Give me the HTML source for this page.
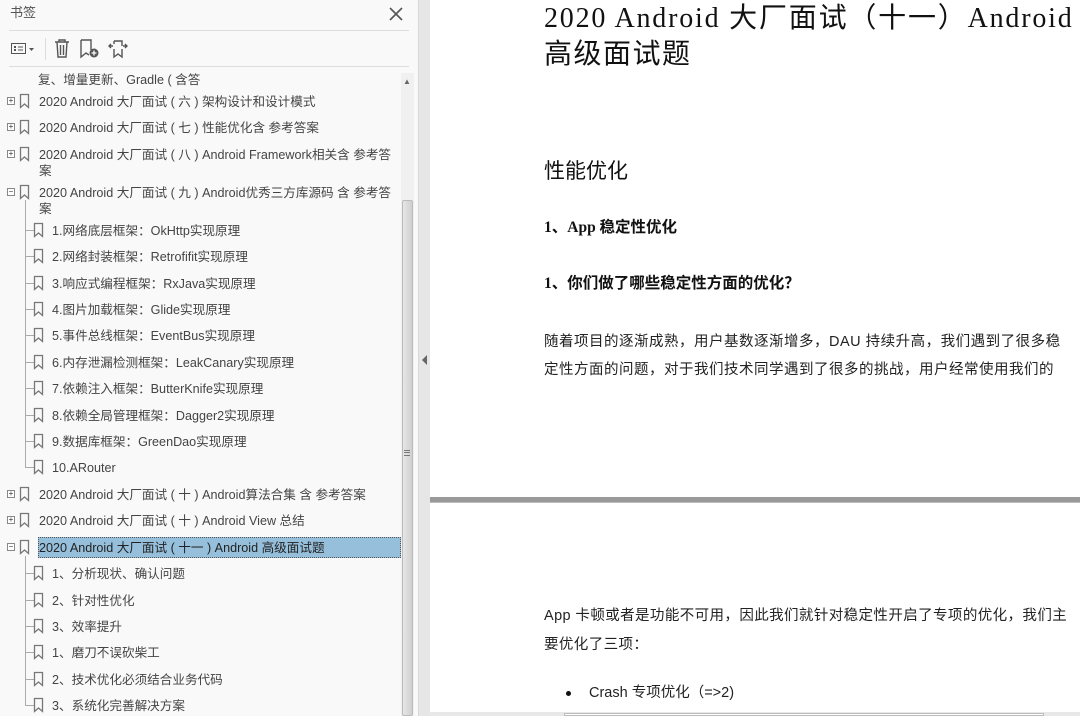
<!DOCTYPE html>
<html><head><meta charset="utf-8"><style>
*{margin:0;padding:0;box-sizing:border-box}
body{width:1080px;height:716px;overflow:hidden;position:relative;background:#fff;font-family:"Liberation Sans","Noto Sans CJK SC",sans-serif}
.side{position:absolute;left:0;top:0;width:418px;height:716px;background:#f9f9f9}
.t{position:absolute;font-size:12.6px;color:#444;white-space:nowrap;line-height:16px}
.bm{position:absolute;width:11px;height:16px}
.pm{position:absolute;width:8px;height:8px;border:1px solid #888;background:#fff;font-size:8px;line-height:6px;text-align:center;color:#333}
.hl{position:absolute;left:33px;width:10px;height:1px;background:#aaa}
.pg{position:absolute;font-family:"Liberation Serif","Noto Sans CJK SC",sans-serif;color:#111;white-space:nowrap}
.ps{position:absolute;font-family:"Liberation Sans","Noto Sans CJK SC",sans-serif;color:#222;white-space:nowrap}
</style></head><body>
<div class="side">
  <div class="t" style="left:10px;top:5px;font-size:13px;color:#555">书签</div>
  <svg style="position:absolute;left:389px;top:7px" width="14" height="14"><path d="M1 1L13 13M13 1L1 13" stroke="#555" stroke-width="1.6"/></svg>
  <div style="position:absolute;left:9px;top:30px;width:400px;height:1px;background:#ddd"></div>
  <div style="position:absolute;left:9px;top:66px;width:400px;height:1px;background:#ddd"></div>
  <svg style="position:absolute;left:10px;top:40px" width="30" height="18"><rect x="1.5" y="3.5" width="14" height="10" fill="none" stroke="#555"/><rect x="4" y="6" width="2" height="2" fill="#555"/><rect x="4" y="9" width="2" height="2" fill="#555"/><path d="M8 7h5M8 10h5" stroke="#555"/><path d="M19 8h5l-2.5 3z" fill="#555"/></svg>
  <div style="position:absolute;left:45px;top:38px;width:1px;height:22px;background:#ddd"></div>
  <svg style="position:absolute;left:52px;top:38px" width="20" height="22"><path d="M3 4h14M7 4V2h6v2M5 4l1 15h8l1-15M8.5 7v10M11.5 7v10" fill="none" stroke="#555" stroke-width="1.4"/></svg>
  <svg style="position:absolute;left:79px;top:38px" width="22" height="22"><path d="M2 2h10v10M2 2v17l5-4 3 2" fill="none" stroke="#555" stroke-width="1.4"/><circle cx="15" cy="15" r="4.5" fill="#555"/><path d="M15 12.5v5M12.5 15h5" stroke="#fff" stroke-width="1.3"/></svg>
  <svg style="position:absolute;left:106px;top:38px" width="24" height="22"><path d="M8 3h8v5M8 3v3M8 11v8l4-3 4 3v-8M3 8h4M5 6l-2 2 2 2M21 8h-4M19 6l2 2-2 2" fill="none" stroke="#555" stroke-width="1.4"/></svg>

  <div style="position:absolute;left:401px;top:73px;width:13px;height:643px;background:#f0f0f0"></div>
  <div style="position:absolute;left:402px;top:200px;width:11px;height:516px;background:linear-gradient(90deg,#e6e6e6,#cfcfcf);border:1px solid #bbb;border-radius:2px"></div>
  <div class="t" style="left:403px;top:74px;font-size:8px;color:#666">▲</div>
  <div style="position:absolute;left:404px;top:450px;width:6px;height:6px;border-top:1px solid #777;border-bottom:1px solid #777"></div>
  <div style="position:absolute;left:404px;top:452px;width:6px;height:1px;background:#777"></div>

  <div style="position:absolute;left:25px;top:200px;width:1px;height:268px;background:#aaa"></div>
  <div style="position:absolute;left:25px;top:556px;width:1px;height:150px;background:#aaa"></div>

  <div class="t" style="left:38px;top:72px">复、增量更新、Gradle ( 含答</div>

  <div class="pm" style="left:7px;top:97px">+</div><svg class="bm" style="left:19px;top:93px"><path d="M1.5 1.5h8v13l-4-3.5-4 3.5z" fill="none" stroke="#777" stroke-width="1.3"/></svg><div class="t" style="left:39px;top:94px">2020 Android 大厂面试 ( 六 ) 架构设计和设计模式</div>
  <div class="pm" style="left:7px;top:123px">+</div><svg class="bm" style="left:19px;top:119px"><path d="M1.5 1.5h8v13l-4-3.5-4 3.5z" fill="none" stroke="#777" stroke-width="1.3"/></svg><div class="t" style="left:39px;top:120px">2020 Android 大厂面试 ( 七 ) 性能优化含 参考答案</div>
  <div class="pm" style="left:7px;top:150px">+</div><svg class="bm" style="left:19px;top:146px"><path d="M1.5 1.5h8v13l-4-3.5-4 3.5z" fill="none" stroke="#777" stroke-width="1.3"/></svg><div class="t" style="left:39px;top:147px">2020 Android 大厂面试 ( 八 ) Android Framework相关含 参考答</div><div class="t" style="left:39px;top:163px">案</div>
  <div class="pm" style="left:7px;top:188px">−</div><svg class="bm" style="left:19px;top:184px"><path d="M1.5 1.5h8v13l-4-3.5-4 3.5z" fill="none" stroke="#777" stroke-width="1.3"/></svg><div class="t" style="left:39px;top:185px">2020 Android 大厂面试 ( 九 ) Android优秀三方库源码 含 参考答</div><div class="t" style="left:39px;top:201px">案</div>

  <div class="hl" style="left:26px;top:230px;width:8px"></div><svg class="bm" style="left:33px;top:222px"><path d="M1.5 1.5h8v13l-4-3.5-4 3.5z" fill="none" stroke="#777" stroke-width="1.3"/></svg><div class="t" style="left:52px;top:223px">1.网络底层框架：OkHttp实现原理</div>
  <div class="hl" style="left:26px;top:256px;width:8px"></div><svg class="bm" style="left:33px;top:248px"><path d="M1.5 1.5h8v13l-4-3.5-4 3.5z" fill="none" stroke="#777" stroke-width="1.3"/></svg><div class="t" style="left:52px;top:249px">2.网络封装框架：Retrofifit实现原理</div>
  <div class="hl" style="left:26px;top:283px;width:8px"></div><svg class="bm" style="left:33px;top:275px"><path d="M1.5 1.5h8v13l-4-3.5-4 3.5z" fill="none" stroke="#777" stroke-width="1.3"/></svg><div class="t" style="left:52px;top:276px">3.响应式编程框架：RxJava实现原理</div>
  <div class="hl" style="left:26px;top:309px;width:8px"></div><svg class="bm" style="left:33px;top:301px"><path d="M1.5 1.5h8v13l-4-3.5-4 3.5z" fill="none" stroke="#777" stroke-width="1.3"/></svg><div class="t" style="left:52px;top:302px">4.图片加载框架：Glide实现原理</div>
  <div class="hl" style="left:26px;top:335px;width:8px"></div><svg class="bm" style="left:33px;top:327px"><path d="M1.5 1.5h8v13l-4-3.5-4 3.5z" fill="none" stroke="#777" stroke-width="1.3"/></svg><div class="t" style="left:52px;top:328px">5.事件总线框架：EventBus实现原理</div>
  <div class="hl" style="left:26px;top:362px;width:8px"></div><svg class="bm" style="left:33px;top:354px"><path d="M1.5 1.5h8v13l-4-3.5-4 3.5z" fill="none" stroke="#777" stroke-width="1.3"/></svg><div class="t" style="left:52px;top:355px">6.内存泄漏检测框架：LeakCanary实现原理</div>
  <div class="hl" style="left:26px;top:388px;width:8px"></div><svg class="bm" style="left:33px;top:380px"><path d="M1.5 1.5h8v13l-4-3.5-4 3.5z" fill="none" stroke="#777" stroke-width="1.3"/></svg><div class="t" style="left:52px;top:381px">7.依赖注入框架：ButterKnife实现原理</div>
  <div class="hl" style="left:26px;top:415px;width:8px"></div><svg class="bm" style="left:33px;top:407px"><path d="M1.5 1.5h8v13l-4-3.5-4 3.5z" fill="none" stroke="#777" stroke-width="1.3"/></svg><div class="t" style="left:52px;top:408px">8.依赖全局管理框架：Dagger2实现原理</div>
  <div class="hl" style="left:26px;top:441px;width:8px"></div><svg class="bm" style="left:33px;top:433px"><path d="M1.5 1.5h8v13l-4-3.5-4 3.5z" fill="none" stroke="#777" stroke-width="1.3"/></svg><div class="t" style="left:52px;top:434px">9.数据库框架：GreenDao实现原理</div>
  <div class="hl" style="left:26px;top:467px;width:8px"></div><svg class="bm" style="left:33px;top:459px"><path d="M1.5 1.5h8v13l-4-3.5-4 3.5z" fill="none" stroke="#777" stroke-width="1.3"/></svg><div class="t" style="left:52px;top:460px">10.ARouter</div>

  <div class="pm" style="left:7px;top:490px">+</div><svg class="bm" style="left:19px;top:486px"><path d="M1.5 1.5h8v13l-4-3.5-4 3.5z" fill="none" stroke="#777" stroke-width="1.3"/></svg><div class="t" style="left:39px;top:487px">2020 Android 大厂面试 ( 十 ) Android算法合集  含 参考答案</div>
  <div class="pm" style="left:7px;top:516px">+</div><svg class="bm" style="left:19px;top:512px"><path d="M1.5 1.5h8v13l-4-3.5-4 3.5z" fill="none" stroke="#777" stroke-width="1.3"/></svg><div class="t" style="left:39px;top:513px">2020 Android 大厂面试 ( 十 ) Android View 总结</div>
  <div style="position:absolute;left:38px;top:537px;width:363px;height:21px;background:#96bfdb;border:1px dotted #555"></div>
  <div class="pm" style="left:7px;top:543px">−</div><svg class="bm" style="left:19px;top:539px"><path d="M1.5 1.5h8v13l-4-3.5-4 3.5z" fill="none" stroke="#777" stroke-width="1.3"/></svg><div class="t" style="left:39px;top:540px;color:#222">2020 Android 大厂面试 ( 十一 ) Android 高级面试题</div>

  <div class="hl" style="left:26px;top:573px;width:8px"></div><svg class="bm" style="left:33px;top:565px"><path d="M1.5 1.5h8v13l-4-3.5-4 3.5z" fill="none" stroke="#777" stroke-width="1.3"/></svg><div class="t" style="left:52px;top:566px">1、分析现状、确认问题</div>
  <div class="hl" style="left:26px;top:600px;width:8px"></div><svg class="bm" style="left:33px;top:592px"><path d="M1.5 1.5h8v13l-4-3.5-4 3.5z" fill="none" stroke="#777" stroke-width="1.3"/></svg><div class="t" style="left:52px;top:593px">2、针对性优化</div>
  <div class="hl" style="left:26px;top:626px;width:8px"></div><svg class="bm" style="left:33px;top:618px"><path d="M1.5 1.5h8v13l-4-3.5-4 3.5z" fill="none" stroke="#777" stroke-width="1.3"/></svg><div class="t" style="left:52px;top:619px">3、效率提升</div>
  <div class="hl" style="left:26px;top:652px;width:8px"></div><svg class="bm" style="left:33px;top:644px"><path d="M1.5 1.5h8v13l-4-3.5-4 3.5z" fill="none" stroke="#777" stroke-width="1.3"/></svg><div class="t" style="left:52px;top:645px">1、磨刀不误砍柴工</div>
  <div class="hl" style="left:26px;top:679px;width:8px"></div><svg class="bm" style="left:33px;top:671px"><path d="M1.5 1.5h8v13l-4-3.5-4 3.5z" fill="none" stroke="#777" stroke-width="1.3"/></svg><div class="t" style="left:52px;top:672px">2、技术优化必须结合业务代码</div>
  <div class="hl" style="left:26px;top:705px;width:8px"></div><svg class="bm" style="left:33px;top:697px"><path d="M1.5 1.5h8v13l-4-3.5-4 3.5z" fill="none" stroke="#777" stroke-width="1.3"/></svg><div class="t" style="left:52px;top:698px">3、系统化完善解决方案</div>
</div>

<div style="position:absolute;left:418px;top:0;width:12px;height:716px;background:#e6e6e6;border-left:1px solid #d8d8d8"></div>
<svg style="position:absolute;left:422px;top:355px" width="6" height="10"><path d="M5 0v10L0 5z" fill="#666"/></svg>

<div class="pg" style="left:544px;top:2px;font-size:28px;line-height:34px;letter-spacing:1.8px">2020 Android 大厂面试（十一）Android</div>
<div class="pg" style="left:544px;top:38px;font-size:28px;line-height:34px;letter-spacing:1.5px">高级面试题</div>
<div class="pg" style="left:544px;top:157px;font-size:21px;line-height:28px">性能优化</div>
<div class="pg" style="left:544px;top:217px;font-size:15.5px;font-weight:bold;line-height:22px">1、App 稳定性优化</div>
<div class="pg" style="left:544px;top:273px;font-size:15.5px;font-weight:bold;line-height:22px">1、你们做了哪些稳定性方面的优化？</div>
<div class="ps" style="left:544px;top:328px;font-size:14.5px;line-height:28px;letter-spacing:0.5px">随着项目的逐渐成熟，用户基数逐渐增多，DAU 持续升高，我们遇到了很多稳<br>定性方面的问题，对于我们技术同学遇到了很多的挑战，用户经常使用我们的</div>

<div style="position:absolute;left:430px;top:497px;width:650px;height:6px;background:#999;border-bottom:1px solid #bbb"></div>

<div class="ps" style="left:544px;top:602px;font-size:14.5px;line-height:29px;letter-spacing:0.4px">App 卡顿或者是功能不可用，因此我们就针对稳定性开启了专项的优化，我们主<br>要优化了三项：</div>
<div style="position:absolute;left:566px;top:691px;width:5px;height:5px;border-radius:50%;background:#111"></div>
<div class="ps" style="left:589px;top:682px;font-size:14.5px;line-height:22px">Crash 专项优化（=&gt;2)</div>

<div style="position:absolute;left:430px;top:712px;width:650px;height:4px;background:#e8e8e8"></div>
<div style="position:absolute;left:564px;top:713px;width:480px;height:3px;border:1px solid #bbb;background:#fff"></div>
</body></html>
